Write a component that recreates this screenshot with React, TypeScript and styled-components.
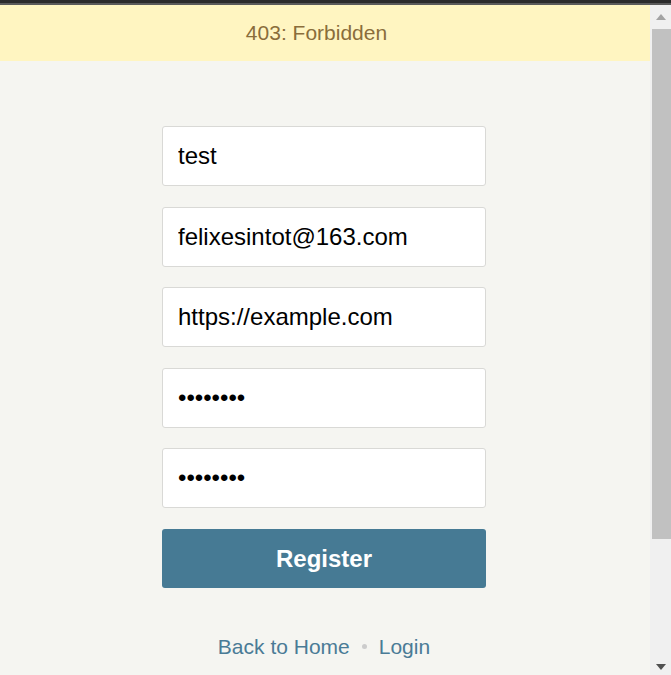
import React from 'react';
import styled, { createGlobalStyle } from 'styled-components';

const COLORS = {
    page: '#f5f5f1',
    chromeDark: '#2b2b2b',
    chromeLine: '#5a5a5a',
    bannerBg: '#fff5c1',
    bannerText: '#8a6d3b',
    border: '#d9d9d6',
    main: '#467a94',
    link: '#4a7b96',
    bullet: '#cccccc',
    track: '#f0f0f0',
    thumb: '#c1c1c1',
};

const FONT = `'Liberation Sans', Arial, sans-serif`;

const fields = [
    { type: 'text', value: 'test' },
    { type: 'email', value: 'felixesintot@163.com' },
    { type: 'url', value: 'https://example.com' },
    { type: 'password', value: '12345678' },
    { type: 'password', value: '12345678' },
];

export default function App() {
    return (
        <>
            <GlobalStyle />
            <Window>
                <ChromeEdge />
                <Body>
                    <Main>
                        <Banner>403: Forbidden</Banner>
                        <Form onSubmit={(e) => e.preventDefault()}>
                            {fields.map((f, i) => (
                                <Input key={i} type={f.type} defaultValue={f.value} readOnly />
                            ))}
                            <SubmitButton type="submit">Register</SubmitButton>
                        </Form>
                        <Links>
                            <LinkText href="#">Back to Home</LinkText>
                            <Dot />
                            <LinkText href="#">Login</LinkText>
                        </Links>
                    </Main>

                    {/* 브라우저 스크롤바 모양 */}
                    <Scrollbar>
                        <ArrowButton $top>
                            <svg width="10" height="6" viewBox="0 0 10 6">
                                <polygon points="5,0 10,6 0,6" fill="#a3a3a3" />
                            </svg>
                        </ArrowButton>
                        <Thumb />
                        <TrackRest />
                        <ArrowButton>
                            <svg width="10" height="6" viewBox="0 0 10 6">
                                <polygon points="0,0 10,0 5,6" fill="#505050" />
                            </svg>
                        </ArrowButton>
                    </Scrollbar>
                </Body>
            </Window>
        </>
    );
}

const GlobalStyle = createGlobalStyle`
    html, body {
        margin: 0;
        padding: 0;
        height: 100%;
        overflow: hidden;
    }
    body {
        font-family: ${FONT};
        background: ${COLORS.page};
    }
    * {
        box-sizing: border-box;
    }
`;

const Window = styled.div`
    display: flex;
    flex-direction: column;
    height: 100vh;
`;

const ChromeEdge = styled.div`
    height: 5px;
    background: ${COLORS.chromeDark};
    border-bottom: 2px solid ${COLORS.chromeLine};
    flex-shrink: 0;
`;

const Body = styled.div`
    flex: 1;
    display: flex;
    min-height: 0;
`;

const Main = styled.div`
    flex: 1;
    background: ${COLORS.page};
    overflow: hidden;
`;

const Banner = styled.div`
    height: 56px;
    display: flex;
    align-items: center;
    justify-content: center;
    padding-right: 17px;
    background: ${COLORS.bannerBg};
    color: ${COLORS.bannerText};
    font-size: 21px;
`;

const Form = styled.form`
    width: 324px;
    margin: 65px auto 0;
    display: flex;
    flex-direction: column;
    gap: 20.6px;
    position: relative;
    left: -1px;
`;

const Input = styled.input`
    height: 60px;
    width: 100%;
    padding: 0 15px;
    border: 1px solid ${COLORS.border};
    border-radius: 3px;
    background: #fff;
    font-family: ${FONT};
    font-size: 24px;
    color: #000;
    outline: none;
`;

const SubmitButton = styled.button`
    height: 59px;
    width: 100%;
    padding: 2px 0 0;
    border: none;
    border-radius: 3px;
    background: ${COLORS.main};
    color: #fff;
    font-family: ${FONT};
    font-size: 24px;
    font-weight: bold;
    cursor: pointer;
`;

const Links = styled.div`
    display: flex;
    align-items: center;
    justify-content: center;
    gap: 12px;
    margin-top: 47px;
    padding-right: 2px;
    font-size: 21px;
    line-height: 24px;
`;

const LinkText = styled.a`
    color: ${COLORS.link};
    text-decoration: none;
`;

const Dot = styled.span`
    width: 5px;
    height: 5px;
    border-radius: 50%;
    background: ${COLORS.bullet};
`;

const Scrollbar = styled.div`
    width: 21px;
    flex-shrink: 0;
    display: flex;
    flex-direction: column;
    background: ${COLORS.track};
`;

const ArrowButton = styled.div<{ $top?: boolean }>`
    height: ${({ $top }) => ($top ? '24px' : '16px')};
    display: flex;
    justify-content: center;
    align-items: ${({ $top }) => ($top ? 'flex-start' : 'flex-end')};
    padding: ${({ $top }) => ($top ? '9px 0 0 1px' : '0 0 5px 1px')};
    flex-shrink: 0;
`;

const Thumb = styled.div`
    height: 510px;
    margin-left: 2px;
    background: ${COLORS.thumb};
    flex-shrink: 0;
`;

const TrackRest = styled.div`
    flex: 1;
`;
